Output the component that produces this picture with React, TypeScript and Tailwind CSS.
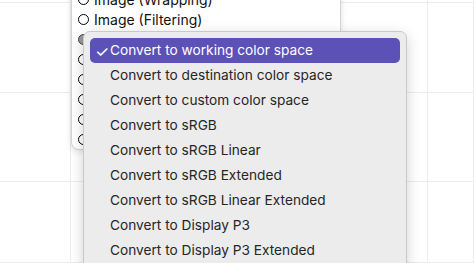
const menuItems = [
  "Convert to working color space",
  "Convert to destination color space",
  "Convert to custom color space",
  "Convert to sRGB",
  "Convert to sRGB Linear",
  "Convert to sRGB Extended",
  "Convert to sRGB Linear Extended",
  "Convert to Display P3",
  "Convert to Display P3 Extended",
];

// only the first two labels peek out from under the menu
const radios = [
  { label: "Image (Wrapping)", on: false },
  { label: "Image (Filtering)", on: false },
  { label: "", on: true },
  { label: "", on: false },
  { label: "", on: false },
  { label: "", on: false },
  { label: "", on: false },
  { label: "", on: false },
];

function Radio({ on }: { on: boolean }) {
  return (
    <span
      className={
        "w-[11px] h-[11px] rounded-full border-[1.5px] shrink-0 " +
        (on ? "bg-[#9a9a9a] border-[#444]" : "bg-white border-black")
      }
    />
  );
}

export default function App() {
  return (
    <div
      className="relative w-[474px] h-[263px] overflow-hidden bg-white"
      style={{ fontFamily: "Inter, 'Noto Sans', sans-serif" }}
    >
      {/* background table grid */}
      <div className="grid grid-cols-[71px_269px_88px_1fr] grid-rows-[3px_90px_89px_81px] h-full">
        {Array.from({ length: 16 }).map((_, i) => (
          <div key={i} className="border-b border-r border-[#ececec]" />
        ))}
      </div>

      {/* radio list popover */}
      <div className="absolute left-[71px] top-[-12px] w-[270px] h-[162px] bg-white border border-[#d4d4d4] rounded-b-[8px] shadow-[0_2px_6px_rgba(0,0,0,0.12)] flex flex-col pl-[6px]">
        {radios.map((r, i) => (
          <div key={i} className="h-[20px] flex items-center gap-[5px] text-[14px] text-[#111]">
            <Radio on={r.on} />
            {r.label && <span>{r.label}</span>}
          </div>
        ))}
      </div>

      {/* dropdown menu */}
      <div className="absolute left-[83px] top-[31px] w-[324px] h-[260px] bg-[#ececec] border border-[#c9c9c9] rounded-[7px] shadow-[0_4px_14px_rgba(0,0,0,0.18)] px-[6px] pt-[6px] flex flex-col">
        {menuItems.map((m, i) => (
          <div
            key={m}
            className={
              "h-[25px] shrink-0 flex items-center rounded-[5px] text-[13.7px] " +
              (i === 0 ? "bg-[#5b51b6] text-white" : "text-[#262626]")
            }
          >
            <span className="w-[20px] pl-[5px] text-[16px] leading-none">{i === 0 ? "✓" : ""}</span>
            <span>{m}</span>
          </div>
        ))}
      </div>
    </div>
  );
}
